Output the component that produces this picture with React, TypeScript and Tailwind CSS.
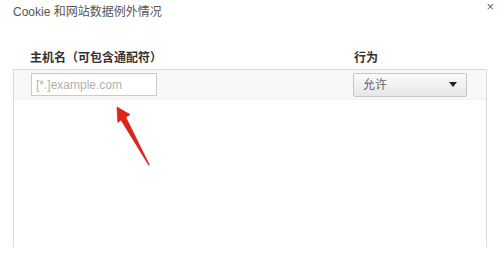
import React from 'react';

const font = { fontFamily: '"Liberation Sans", "Noto Sans CJK SC", sans-serif' };

// Red annotation arrow pointing at the host input
const Arrow = () => (
  <svg className="absolute left-0 top-0 pointer-events-none" width="500" height="265" viewBox="0 0 500 265">
    <polygon
      points="117,107 130,114.5 125.8,117.2 149.4,165 148.6,165 121,120 117.8,122.5"
      fill="#e2231a"
      stroke="#c0141a"
      strokeWidth="0.6"
      strokeLinejoin="round"
    />
  </svg>
);

export default function App() {
  return (
    <div className="relative w-[500px] h-[265px] bg-white overflow-hidden" style={font}>
      <div className="pl-[13px] pt-[4px] text-[12px] leading-[16px] text-[#555]">Cookie 和网站数据例外情况</div>
      <span className="absolute right-[6px] top-[-3px] text-[13px] text-[#666]">×</span>

      <div className="flex mt-[31px] text-[12px] leading-[14px] font-bold text-[#333]">
        <div className="pl-[30px] w-[354px]">主机名（可包含通配符）</div>
        <div>行为</div>
      </div>

      <div className="mx-[13px] mt-[4px] h-[178px] border-l border-r border-t border-[#dcdcdc]">
        <div className="flex items-center h-[30px] bg-[#f8f8f8] border-b border-[#f2f2f2]">
          <div className="ml-[17px] w-[126px] h-[23px] border border-[#c9c9c9] bg-white flex items-center px-[4px] text-[12px] text-[#b0b0b0]">
            [*.]example.com
          </div>
          <div className="ml-[196px] w-[114px] h-[24px] rounded-[2px] border border-[#c6c6c6] bg-gradient-to-b from-[#fbfbfb] to-[#e6e6e6] flex items-center justify-between px-[9px] text-[12px] text-[#666]">
            <span>允许</span>
            <span className="w-0 h-0 border-l-[4px] border-r-[4px] border-t-[5px] border-l-transparent border-r-transparent border-t-[#222]" />
          </div>
        </div>
      </div>

      <Arrow />
    </div>
  );
}
